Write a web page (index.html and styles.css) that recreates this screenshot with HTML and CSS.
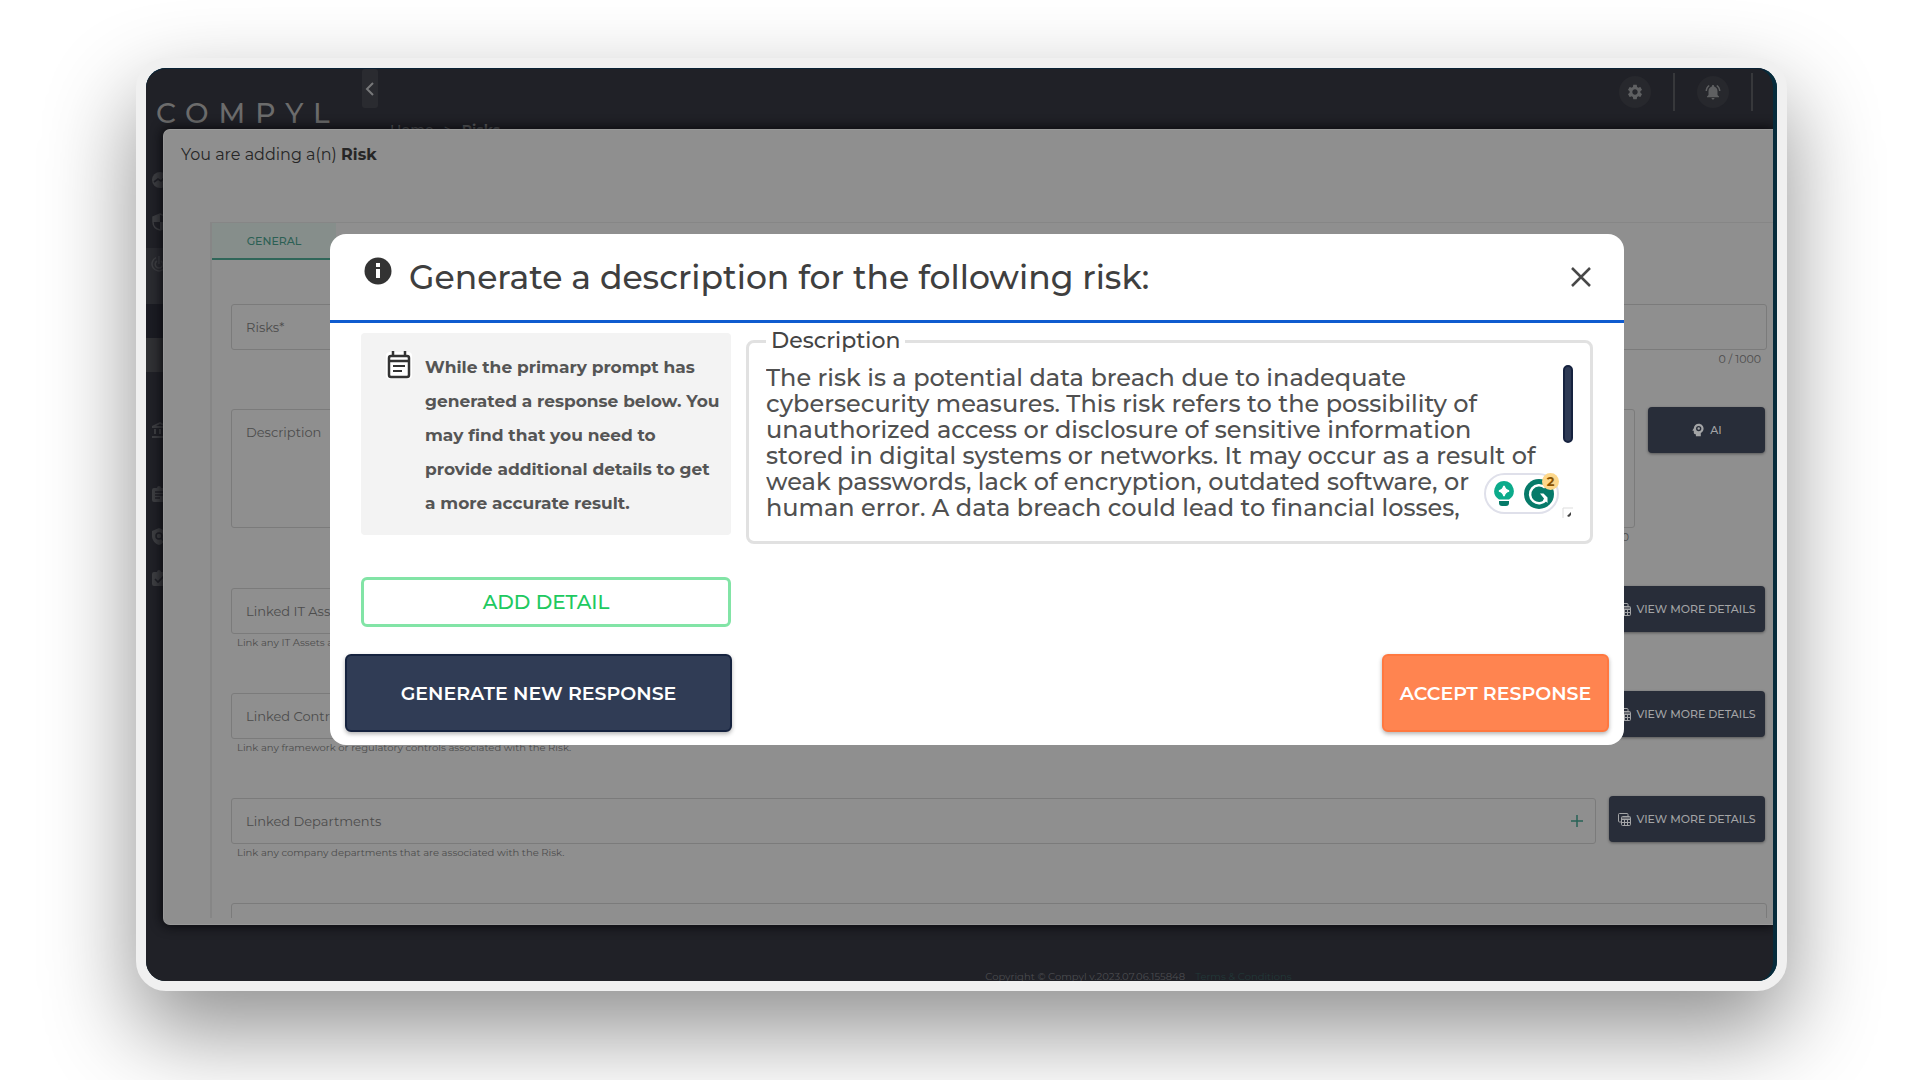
FILE: index.html
```html
<!DOCTYPE html>
<html lang="en">
<head>
    <meta charset="UTF-8">
    <meta name="viewport" content="width=device-width, initial-scale=1.0">
    <title>Compyl - Risks</title>
    <link rel="stylesheet" href="styles.css">
</head>
<body>

<div class="screen">
    <div class="app">
        <header class="topbar">
            <div class="logo">COMPYL</div>
            <button type="button" class="collapse" aria-label="Collapse menu">
                <svg width="10" height="16" viewBox="0 0 10 16"><path d="M8 2L2 8l6 6" fill="none" stroke="currentColor" stroke-width="2"/></svg>
            </button>
            <nav class="breadcrumb">
                <a href="#">Home</a>
                <span>&gt;</span>
                <b>Risks</b>
            </nav>
            <div class="tools">
                <button type="button" class="round" aria-label="Settings">
                    <svg width="18" height="18" viewBox="0 0 24 24" fill="currentColor"><path d="M19.14 12.94c.04-.3.06-.61.06-.94 0-.32-.02-.64-.07-.94l2.03-1.58c.18-.14.23-.41.12-.61l-1.92-3.32c-.12-.22-.37-.29-.59-.22l-2.39.96c-.5-.38-1.03-.7-1.62-.94l-.36-2.54c-.04-.24-.24-.41-.48-.41h-3.84c-.24 0-.43.17-.47.41l-.36 2.54c-.59.24-1.13.57-1.62.94l-2.39-.96c-.22-.08-.47 0-.59.22L2.74 8.87c-.12.21-.08.47.12.61l2.03 1.58c-.05.3-.09.63-.09.94s.02.64.07.94l-2.03 1.58c-.18.14-.23.41-.12.61l1.92 3.32c.12.22.37.29.59.22l2.39-.96c.5.38 1.03.7 1.62.94l.36 2.54c.05.24.24.41.48.41h3.84c.24 0 .44-.17.47-.41l.36-2.54c.59-.24 1.13-.56 1.62-.94l2.39.96c.22.08.47 0 .59-.22l1.92-3.32c.12-.22.07-.47-.12-.61l-2.01-1.58zM12 15.6c-1.98 0-3.6-1.62-3.6-3.6s1.62-3.6 3.6-3.6 3.6 1.62 3.6 3.6-1.62 3.6-3.6 3.6z"/></svg>
                </button>
                <span class="divider"></span>
                <button type="button" class="round" aria-label="Notifications">
                    <svg width="18" height="18" viewBox="0 0 24 24" fill="currentColor"><path d="M7.58 4.08L6.15 2.65C3.75 4.48 2.17 7.3 2.03 10.5h2c.15-2.65 1.51-4.97 3.55-6.42zm12.39 6.42h2c-.15-3.2-1.73-6.02-4.12-7.85l-1.42 1.43c2.02 1.45 3.39 3.77 3.54 6.42zM18 11c0-3.07-1.64-5.64-4.5-6.32V4c0-.83-.67-1.5-1.5-1.5s-1.5.67-1.5 1.5v.68C7.63 5.36 6 7.92 6 11v5l-2 2v1h16v-1l-2-2v-5zm-6 11c1.1 0 2-.9 2-2h-4c0 1.1.9 2 2 2z"/></svg>
                </button>
                <span class="divider"></span>
            </div>
        </header>

        <div class="middle">
            <aside class="rail">
                <div class="rail-item">
                    <svg width="16" height="16" viewBox="0 0 16 16"><circle cx="8" cy="8" r="8" fill="currentColor"/><path d="M2 10l4-3 3 2 5-5" fill="none" stroke="#202127" stroke-width="1.6"/></svg>
                </div>
                <div class="rail-item">
                    <svg width="16" height="18" viewBox="0 0 16 18"><path d="M8 1l7 3v5c0 4-3 7-7 8-4-1-7-4-7-8V4z" fill="#202127" stroke="currentColor" stroke-width="1.5"/><path d="M8 1v8H1V4zM8 9h7c0 4-3 7-7 8z" fill="currentColor"/></svg>
                </div>
                <div class="rail-group">
                    <svg width="16" height="16" viewBox="0 0 16 16" fill="none" stroke="currentColor" stroke-width="1.5"><path d="M5 1.6A7 7 0 1 0 13 3"/><path d="M6 5a3.8 3.8 0 1 0 4 0M8 0v8"/></svg>
                </div>
                <div class="rail-sub"></div>
                <div class="rail-sub active"></div>
                <div class="rail-item spaced">
                    <svg width="16" height="16" viewBox="0 0 16 16" fill="currentColor"><path d="M8 0L0 4v2h16V4zM8 2l4 2H4zM2 7h2v5H2zM7 7h2v5H7zM12 7h2v5h-2zM0 14h16v2H0z"/></svg>
                </div>
                <div class="rail-item lower">
                    <svg width="14" height="16" viewBox="0 0 14 16"><path d="M2 2h3a2 2 0 0 1 4 0h3a2 2 0 0 1 2 2v10a2 2 0 0 1-2 2H2a2 2 0 0 1-2-2V4a2 2 0 0 1 2-2z" fill="currentColor"/><path d="M3 6h8M3 9h8M3 12h5" stroke="#202127" stroke-width="1.5"/></svg>
                </div>
                <div class="rail-item">
                    <svg width="14" height="17" viewBox="0 0 14 17"><path d="M7 0l7 3v5c0 4-3 8-7 9-4-1-7-5-7-9V3z" fill="currentColor"/><circle cx="7" cy="8" r="3" fill="none" stroke="#202127" stroke-width="1.6"/><path d="M9 10l3 3" stroke="#202127" stroke-width="1.6"/></svg>
                </div>
                <div class="rail-item">
                    <svg width="14" height="16" viewBox="0 0 14 16"><path d="M2 2h3a2 2 0 0 1 4 0h3a2 2 0 0 1 2 2v10a2 2 0 0 1-2 2H2a2 2 0 0 1-2-2V4a2 2 0 0 1 2-2z" fill="currentColor"/><path d="M3 9l3 3 6-6" fill="none" stroke="#202127" stroke-width="1.6"/></svg>
                </div>
            </aside>

            <main class="sheet">
                <p class="sheet-title">You are adding a(n) <b>Risk</b></p>
                <section class="panel">
                    <div class="tabs">
                        <button type="button" class="tab">GENERAL</button>
                    </div>
                    <form class="rows">
                        <div class="row">
                            <div class="cell">
                                <div class="field">
                                    <label for="risks">Risks*</label>
                                    <input type="text" id="risks">
                                </div>
                                <span class="counter">0 / 1000</span>
                            </div>
                        </div>
                        <div class="row tall">
                            <div class="cell">
                                <div class="field area">
                                    <label for="riskDescription">Description</label>
                                    <textarea id="riskDescription"></textarea>
                                </div>
                                <span class="counter">0 / 10000</span>
                            </div>
                            <button type="button" class="dark-btn ai">
                                <svg width="14" height="14" viewBox="3 2 18 20"><path d="M13 3C9.25 3 6.2 5.94 6.02 9.64L4.1 12.2c-.25.33-.01.8.4.8H6v3c0 1.1.9 2 2 2h1v3h7v-4.68c2.36-1.12 4-3.53 4-6.32 0-3.87-3.13-7-7-7z" fill="currentColor"/><circle cx="13" cy="10" r="2.8" fill="none" stroke="#282d39" stroke-width="2"/></svg>
                                AI
                            </button>
                        </div>
                        <div class="row linked">
                            <div class="cell">
                                <div class="field">
                                    <label for="assets">Linked IT Assets</label>
                                    <input type="text" id="assets">
                                    <button type="button" class="plus" aria-label="Add IT asset">
                                        <svg width="12" height="12" viewBox="0 0 12 12"><path d="M6 0v12M0 6h12" stroke="currentColor" stroke-width="1.5"/></svg>
                                    </button>
                                </div>
                                <span class="helper">Link any IT Assets associated with the Risk.</span>
                            </div>
                            <button type="button" class="dark-btn">
                                <svg width="13" height="13" viewBox="0 0 13 13" fill="none" stroke="currentColor"><path d="M3 9H1.5a1 1 0 0 1-1-1V1.5a1 1 0 0 1 1-1H9a1 1 0 0 1 1 1V3"/><rect x="3.5" y="3.5" width="9" height="9" rx="1"/><path d="M3.5 6.5h9M3.5 9.5h9M6.5 6.5v6M9.5 6.5v6M4 5h8"/></svg>
                                VIEW MORE DETAILS
                            </button>
                        </div>
                        <div class="row linked">
                            <div class="cell">
                                <div class="field">
                                    <label for="controls">Linked Controls</label>
                                    <input type="text" id="controls">
                                    <button type="button" class="plus" aria-label="Add control">
                                        <svg width="12" height="12" viewBox="0 0 12 12"><path d="M6 0v12M0 6h12" stroke="currentColor" stroke-width="1.5"/></svg>
                                    </button>
                                </div>
                                <span class="helper">Link any framework or regulatory controls associated with the Risk.</span>
                            </div>
                            <button type="button" class="dark-btn">
                                <svg width="13" height="13" viewBox="0 0 13 13" fill="none" stroke="currentColor"><path d="M3 9H1.5a1 1 0 0 1-1-1V1.5a1 1 0 0 1 1-1H9a1 1 0 0 1 1 1V3"/><rect x="3.5" y="3.5" width="9" height="9" rx="1"/><path d="M3.5 6.5h9M3.5 9.5h9M6.5 6.5v6M9.5 6.5v6M4 5h8"/></svg>
                                VIEW MORE DETAILS
                            </button>
                        </div>
                        <div class="row linked">
                            <div class="cell">
                                <div class="field">
                                    <label for="departments">Linked Departments</label>
                                    <input type="text" id="departments">
                                    <button type="button" class="plus" aria-label="Add department">
                                        <svg width="12" height="12" viewBox="0 0 12 12"><path d="M6 0v12M0 6h12" stroke="currentColor" stroke-width="1.5"/></svg>
                                    </button>
                                </div>
                                <span class="helper">Link any company departments that are associated with the Risk.</span>
                            </div>
                            <button type="button" class="dark-btn">
                                <svg width="13" height="13" viewBox="0 0 13 13" fill="none" stroke="currentColor"><path d="M3 9H1.5a1 1 0 0 1-1-1V1.5a1 1 0 0 1 1-1H9a1 1 0 0 1 1 1V3"/><rect x="3.5" y="3.5" width="9" height="9" rx="1"/><path d="M3.5 6.5h9M3.5 9.5h9M6.5 6.5v6M9.5 6.5v6M4 5h8"/></svg>
                                VIEW MORE DETAILS
                            </button>
                        </div>
                        <div class="row">
                            <div class="cell">
                                <div class="field"></div>
                            </div>
                        </div>
                    </form>
                </section>
            </main>
        </div>

        <footer class="footer">
            <span>Copyright © Compyl v.2023.07.06.155848</span>
            <a href="#">Terms &amp; Conditions</a>
        </footer>
    </div>

    <!-- AI description dialog -->
    <div class="dialog" role="dialog" aria-labelledby="dialogTitle">
        <div class="dialog-head">
            <svg class="info" width="28" height="28" viewBox="0 0 28 28"><circle cx="14" cy="14" r="13.5" fill="#333"/><path d="M12 6h4v4h-4zM12 12h4v9h-4z" fill="#fff"/></svg>
            <h2 id="dialogTitle">Generate a description for the following risk:</h2>
            <button type="button" class="close" aria-label="Close">
                <svg width="20" height="20" viewBox="0 0 20 20"><path d="M1 1l18 18M19 1L1 19" stroke="#484848" stroke-width="2.5"/></svg>
            </button>
        </div>

        <div class="dialog-body">
            <div class="note">
                <svg width="28" height="30" viewBox="0 0 28 30"><rect x="1" y="2" width="26" height="27" rx="4" fill="#fff"/><path d="M6 6h16a2 2 0 0 1 2 2v17a2 2 0 0 1-2 2H6a2 2 0 0 1-2-2V8a2 2 0 0 1 2-2zM4 11h20M8 1v5M20 1v5" fill="none" stroke="#333" stroke-width="2.5"/><path d="M8 16h12M8 21h9" stroke="#333" stroke-width="2.2"/></svg>
                <p>While the primary prompt has<br>generated a response below. You<br>may find that you need to<br>provide additional details to get<br>a more accurate result.</p>
            </div>
            <fieldset class="answer">
                <legend><label for="answer">Description</label></legend>
                <textarea id="answer" wrap="off" spellcheck="false">The risk is a potential data breach due to inadequate
cybersecurity measures. This risk refers to the possibility of
unauthorized access or disclosure of sensitive information
stored in digital systems or networks. It may occur as a result of
weak passwords, lack of encryption, outdated software, or
human error. A data breach could lead to financial losses,</textarea>
                <span class="thumb"></span>
                <svg class="grip" width="12" height="12" viewBox="0 0 12 12"><path d="M1 11V1h10" fill="none" stroke="#ddd"/><path d="M5 9l4-4v3l-2 2z" fill="#444"/></svg>
                <div class="assist">
                    <svg width="20" height="25" viewBox="0 0 20 25"><path d="M10 0a10 10 0 0 1 5 18.5H5A10 10 0 0 1 10 0z" fill="#0cab8b"/><path d="M10 5q1 4 5 5-4 1-5 5-1-4-5-5 4-1 5-5z" fill="#fff" stroke="#fff" stroke-width="1.5"/><path d="M5 20h10v2q0 3-3 3H8q-3 0-3-3z" fill="#057a68"/></svg>
                    <svg width="30" height="30" viewBox="0 0 30 30"><circle cx="15" cy="15" r="15" fill="#067a69"/><path d="M21 8.5A9 9 0 1 0 22 21" fill="none" stroke="#fff" stroke-width="2.5"/><path d="M16 14.500h3.500l4 4v5.500l-2.500-2.500-3 2 2-4z" fill="#fff"/></svg>
                    <span class="badge">2</span>
                </div>
            </fieldset>
            <button type="button" class="add">ADD DETAIL</button>
        </div>

        <div class="dialog-foot">
            <button type="button" class="generate">GENERATE NEW RESPONSE</button>
            <button type="button" class="accept">ACCEPT RESPONSE</button>
        </div>
    </div>
</div>

</body>
</html>
```
FILE: styles.css
```css
* {
    box-sizing: border-box;
}

body {
    margin: 0;
    height: 100vh;
    padding: 58px 133px 89px 136px;
    display: flex;
    background: #fff;
    font-family: Montserrat, Inter, sans-serif;
    overflow: hidden;
}

button, input, textarea {
    font: inherit;
    color: inherit;
    background: none;
    border: none;
    padding: 0;
    margin: 0;
    outline: none;
    resize: none;
}

button {
    cursor: pointer;
}

p, h2 {
    margin: 0;
}

svg {
    flex: none;
    display: block;
}

.screen {
    position: relative;
    flex: 1;
    display: flex;
    min-width: 0;
    border: 10px solid #f0f0f0;
    border-radius: 30px;
    background: #062b3b;
    box-shadow: 0 40px 90px rgba(0, 0, 0, 0.44);
}

.app {
    flex: 1;
    min-width: 0;
    display: flex;
    flex-direction: column;
    border-top: 1px solid #0a2236;
    border-right: 4px solid #062b3b;
    border-radius: 20px;
    background: #202127;
    overflow: hidden;
}

/* Top bar */
.topbar {
    flex: none;
    display: flex;
    align-items: flex-start;
    height: 60px;
    overflow: hidden;
    color: #5f6062;
}

.logo {
    width: 216px;
    padding: 28px 0 0 10px;
    font-size: 28px;
    line-height: 32px;
    font-weight: 500;
    letter-spacing: 10px;
    color: #6c6c6c;
}

.collapse {
    display: flex;
    justify-content: center;
    align-items: center;
    width: 16px;
    height: 39px;
    background: #2a2b30;
    border-radius: 3px;
    color: #77787a;
}

.breadcrumb {
    display: flex;
    gap: 10px;
    padding: 52px 0 0 12px;
    font-size: 14px;
    line-height: 18px;
    font-weight: 500;
}

.breadcrumb a {
    color: inherit;
    text-decoration: none;
}

.tools {
    display: flex;
    align-items: center;
    gap: 22px;
    margin-left: auto;
    padding: 4px 20px 0 0;
}

.round {
    display: flex;
    justify-content: center;
    align-items: center;
    width: 32px;
    height: 32px;
    border-radius: 50%;
    background: #27282d;
}

.divider {
    width: 2px;
    height: 38px;
    background: #37383b;
}

/* Side rail */
.middle {
    flex: 1;
    min-height: 0;
    display: flex;
}

.rail {
    width: 17px;
    padding-top: 30px;
    color: #3e3f43;
    overflow: hidden;
}

.rail-item {
    display: flex;
    align-items: center;
    height: 42px;
    padding-left: 6px;
}

.rail-group {
    margin-top: 5px;
    height: 56px;
    padding: 8px 0 0 5px;
    background: #2a2b30;
}

.rail-sub {
    height: 34px;
    background: #1b1c23;
}

.rail-sub.active {
    background: #303134;
}

.spaced {
    margin-top: 37px;
}

.lower {
    margin-top: 22px;
}

/* Form sheet */
.sheet {
    flex: 1;
    min-width: 0;
    display: flex;
    flex-direction: column;
    padding: 15px 0 6px 17px;
    background: #8f8f8f;
    border: 1px solid #999;
    border-right: none;
    border-radius: 7px 0 0 7px;
    box-shadow: 0 0 12px 1px #08080c;
}

.sheet-title {
    font-size: 16px;
    line-height: 20px;
    color: #262626;
}

.panel {
    flex: 1;
    min-height: 0;
    display: flex;
    flex-direction: column;
    margin: 57px 0 0 29px;
    border-left: 2px solid #868686;
    border-top: 1px solid #868686;
    overflow: hidden;
}

.tabs {
    flex: none;
    display: flex;
}

.tab {
    width: 124px;
    height: 37px;
    background: #868e8b;
    border-bottom: 2px solid #2f6659;
    color: #2c6054;
    font-size: 11px;
    font-weight: 500;
}

.rows {
    display: flex;
    flex-direction: column;
    padding: 44px 6px 0 19px;
}

.row {
    display: flex;
    gap: 13px;
    flex: none;
    height: 105px;
}

.row.tall {
    height: 179px;
    padding-right: 2px;
}

.row.linked {
    padding-right: 2px;
}

.cell {
    flex: 1;
    min-width: 0;
    display: flex;
    flex-direction: column;
    gap: 2px;
}

.field {
    display: flex;
    align-items: center;
    gap: 8px;
    height: 46px;
    padding: 0 12px 0 14px;
    border: 1px solid #7b7b7b;
    border-radius: 3px;
    font-size: 13px;
    line-height: 16px;
    color: #4c4c4c;
}

.field input {
    flex: 1;
    min-width: 0;
}

.field.area {
    flex-direction: column;
    align-items: stretch;
    height: 119px;
    padding: 14px;
}

.field textarea {
    flex: 1;
    min-height: 0;
}

.plus {
    color: #286357;
}

.counter, .helper {
    font-size: 10px;
    line-height: 14px;
    color: #4c4c4c;
}

.helper {
    padding-left: 6px;
}

.counter {
    padding-right: 6px;
    text-align: right;
    font-size: 11px;
}

.dark-btn {
    display: flex;
    justify-content: center;
    align-items: center;
    gap: 5px;
    width: 156px;
    height: 46px;
    margin-top: -2px;
    border-radius: 4px;
    background: #282d39;
    box-shadow: 0 1px 3px rgba(0, 0, 0, 0.4);
    color: #a3a4a6;
    font-size: 11px;
    font-weight: 500;
    white-space: nowrap;
}

.dark-btn.ai {
    width: 117px;
}

.footer {
    flex: none;
    display: flex;
    justify-content: center;
    gap: 10px;
    height: 56px;
    padding: 44px 0 0 358px;
    font-size: 10px;
    line-height: 16px;
    color: #4b4c50;
    overflow: hidden;
}

.footer a {
    color: #213838;
    text-decoration: none;
}

/* Dialog */
.dialog {
    position: absolute;
    top: 166px;
    left: 184px;
    right: 153px;
    background: #fff;
    border-radius: 16px;
    overflow: hidden;
}

.dialog-head {
    display: flex;
    align-items: center;
    height: 89px;
    padding: 0 33px 0 34px;
    border-bottom: 3px solid #0f5bcf;
}

.info {
    margin-bottom: 12px;
}

.dialog-head h2 {
    padding-left: 17px;
    font-size: 33px;
    line-height: 40px;
    font-weight: 500;
    color: #3f3f3f;
    white-space: nowrap;
}

.close {
    margin-left: auto;
}

.dialog-body {
    display: grid;
    grid-template-columns: 370px 1fr;
    column-gap: 15px;
    padding: 10px 31px 0;
    row-gap: 33px;
}

.note {
    display: flex;
    gap: 12px;
    height: 202px;
    padding: 17px 8px 0 24px;
    background: #f3f3f3;
    border-radius: 4px;
}

.note p {
    font-size: 17px;
    line-height: 34px;
    font-weight: 700;
    color: #555;
    white-space: nowrap;
}

.answer {
    position: relative;
    min-width: 0;
    margin: 0;
    height: 211px;
    padding: 16px 16px 0 17px;
    border: 3px solid #e1e1e1;
    border-radius: 8px;
}

.answer legend {
    padding: 0 5px;
    font-size: 22px;
    line-height: 16px;
    font-weight: 500;
    color: #444;
}

.answer textarea {
    display: block;
    width: 100%;
    height: 160px;
    font-size: 24px;
    line-height: 26px;
    font-weight: 500;
    color: #505050;
    overflow: hidden;
}

.thumb {
    position: absolute;
    top: 16px;
    right: 17px;
    width: 10px;
    height: 78px;
    border: 2px solid #16223f;
    border-radius: 5px;
    background: #2e3a55;
}

.grip {
    position: absolute;
    right: 16px;
    bottom: 22px;
}

.assist {
    position: absolute;
    right: 31px;
    bottom: 27px;
    display: flex;
    align-items: center;
    gap: 10px;
    width: 75px;
    height: 41px;
    padding-left: 8px;
    background: #fff;
    border: 2px solid #dfe0ea;
    border-radius: 21px;
}

.badge {
    position: absolute;
    top: -2px;
    right: -2px;
    width: 17px;
    height: 17px;
    border-radius: 50%;
    background: #fdd78a;
    color: #8a5200;
    font-size: 13px;
    line-height: 17px;
    font-weight: 700;
    text-align: center;
}

.add {
    height: 50px;
    border: 3px solid #82e4a6;
    border-radius: 6px;
    color: #20c95f;
    font-size: 20px;
    font-weight: 500;
}

.dialog-foot {
    display: flex;
    justify-content: space-between;
    padding: 27px 15px 13px;
}

.generate, .accept {
    height: 78px;
    border-radius: 6px;
    box-shadow: 0 2px 4px rgba(0, 0, 0, 0.3);
    color: #fff;
    font-size: 19px;
    font-weight: 600;
    white-space: nowrap;
}

.generate {
    width: 387px;
    border: 2px solid #16233f;
    background: #303c55;
}

.accept {
    width: 227px;
    border: 2px solid #ff7840;
    background: #ff8450;
}
```
